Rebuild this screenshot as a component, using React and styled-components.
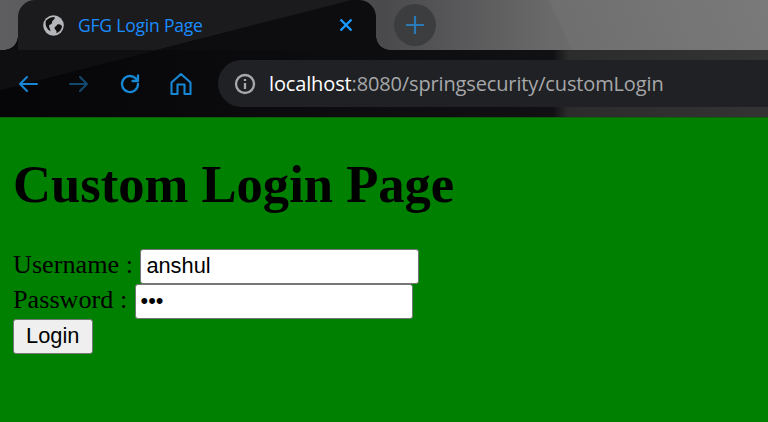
import React from "react";
import styled, { createGlobalStyle } from "styled-components";

const Global = createGlobalStyle`
  html, body { margin: 0; padding: 0; width: 768px; height: 422px; overflow: hidden; background: #008000; }
`;

const Chrome = styled.header`
  height: 117px;
  border-bottom: 1px solid #0a5c0e;
  display: flex;
  flex-direction: column;
`;

const TabStrip = styled.div`
  height: 50px;
  padding-left: 18px;
  display: flex;
  align-items: flex-start;
  background:
    linear-gradient(66deg, transparent 0 72%, #6f6f70 72.6%, #7a7a7b 100%),
    linear-gradient(90deg, #5e5e60 0%, #4a4a4c 50%, #6a6a6b 72%);
`;

const Tab = styled.div`
  position: relative;
  width: 358px;
  height: 50px;
  box-sizing: border-box;
  padding: 0 23px 0 25px;
  border-radius: 17px 17px 0 0;
  display: flex;
  align-items: center;
  gap: 14px;
  background: linear-gradient(165.7deg, #1b1b1d 0 60%, #0d0d0f 60.4% 100%);

  &::before, &::after {
    content: "";
    position: absolute;
    bottom: 0;
    width: 14px;
    height: 14px;
  }
  &::before {
    left: -14px;
    background: radial-gradient(circle at 0 0, transparent 13.5px, #0d0d0f 14px);
  }
  &::after {
    right: -14px;
    background: radial-gradient(circle at 100% 0, transparent 13.5px, #0d0d0f 14px);
  }
`;

const TabTitle = styled.span`
  flex: 1;
  color: #1a8cff;
  font: 400 17.5px "Open Sans", sans-serif;
  letter-spacing: -0.2px;
`;

const NewTab = styled.div`
  width: 42px;
  height: 42px;
  margin: 4px 0 0 18px;
  border-radius: 50%;
  background: #3c3d3f;
  display: flex;
  align-items: center;
  justify-content: center;
`;

const Toolbar = styled.nav`
  flex: 1;
  display: flex;
  align-items: center;
  padding-left: 16px;
  background:
    linear-gradient(165.7deg, #0f0f11 0 15.2%, transparent 15.3%),
    linear-gradient(90deg, #060608 0%, #111113 72%, #2c2c2d 74%, #333334 100%);
`;

const NavIcons = styled.div`
  display: flex;
  align-items: center;
  gap: 27px;
  width: 202px;
`;

const Omnibox = styled.div`
  flex: 1;
  height: 47px;
  border-radius: 24px 0 0 24px;
  background: #202124;
  display: flex;
  align-items: center;
  padding-left: 16px;
  gap: 13px;
`;

const Url = styled.span`
  color: #a6a7a9;
  font: 400 20px "Open Sans", sans-serif;
  letter-spacing: -0.14px;
`;

const Host = styled.b`
  color: #fff;
  font-weight: 500;
`;

const Page = styled.main`
  padding: 0 13px;
  font: 26.2px "Liberation Serif", serif;
  color: #000;
`;

const Title = styled.h1`
  margin: 36px 0 35px;
  font: 700 52.6px/60px "Liberation Serif", serif;
`;

const Row = styled.label`
  display: flex;
  align-items: center;
  height: 35px;
  gap: 7.4px;
`;

const LabelText = styled.span`
  padding-bottom: 3px;
`;

const Field = styled.input`
  width: 278.6px;
  height: 35px;
  box-sizing: border-box;
  padding: 0 5px 2px;
  border: 1px solid #767676;
  border-radius: 3px;
  background: #fff;
  color: #000;
  font: 400 21.8px "Liberation Sans", sans-serif;
`;

const Submit = styled.button`
  display: block;
  width: 79.5px;
  height: 35px;
  padding: 0 0 2px;
  border: 1px solid #767676;
  border-radius: 3px;
  background: #efefef;
  color: #000;
  font: 400 21.8px "Liberation Sans", sans-serif;
`;

const Ic = ({ children, size = 24, color = "#1787d6", w = 2 }) => (
  <svg width={size} height={size} viewBox="0 0 24 24" fill="none" stroke={color} strokeWidth={w} strokeLinecap="round" strokeLinejoin="round">{children}</svg>
);

export default function App() {
  return (
    <>
      <Global />
      <Chrome>
        <TabStrip>
          <Tab>
            <svg width="21" height="21" viewBox="0 0 22 22">
              <circle cx="11" cy="11" r="10.8" fill="#b4b6b9" />
              <path d="M3 6c3-3 6-4 9-4 1 2-1 3-2 4-1 2 0 3-2 4-2 0-2 2-1 4l1 3C4 15 2 11 3 6zM15 10c2-1 4 0 5 2-1 4-3 6-6 7 1-2-1-3-2-5 0-2 2-2 3-4z" fill="#111" />
            </svg>
            <TabTitle>GFG Login Page</TabTitle>
            <svg width="14" height="14" viewBox="0 0 14 14" stroke="#1a9bff" strokeWidth="2.4">
              <path d="M1.5 1.5l11 11M12.5 1.5l-11 11" />
            </svg>
          </Tab>
          <NewTab>
            <svg width="18" height="18" viewBox="0 0 18 18" stroke="#2a7ab8" strokeWidth="2.2">
              <path d="M9 0v18M0 9h18" />
            </svg>
          </NewTab>
        </TabStrip>
        <Toolbar>
          <NavIcons>
            <Ic><path d="M21 12H4M11 5l-7 7 7 7" /></Ic>
            <Ic color="#12496f"><path d="M3 12h17M13 5l7 7-7 7" /></Ic>
            <Ic w={2.3}><path d="M20 12a8 8 0 1 1-2.5-5.8L20 9M20 3.5V9h-5.5" /></Ic>
            <Ic w={2.1}><path d="M2.5 10.5L12 2l9.5 8.5V22H15.5v-9.5h-7V22H2.5z" /></Ic>
          </NavIcons>
          <Omnibox>
            <svg width="22" height="22" viewBox="0 0 22 22" fill="none" stroke="#a8a9ab" strokeWidth="2.3">
              <circle cx="11" cy="11" r="9" />
              <path d="M11 10v6M11 6v2" />
            </svg>
            <Url><Host>localhost</Host>:8080/springsecurity/customLogin</Url>
          </Omnibox>
        </Toolbar>
      </Chrome>
      <Page>
        <Title>Custom Login Page</Title>
        <form>
          <Row><LabelText>Username :</LabelText><Field type="text" defaultValue="anshul" /></Row>
          <Row><LabelText>Password :</LabelText><Field type="password" defaultValue="abc" /></Row>
          <Submit type="button">Login</Submit>
        </form>
      </Page>
    </>
  );
}
